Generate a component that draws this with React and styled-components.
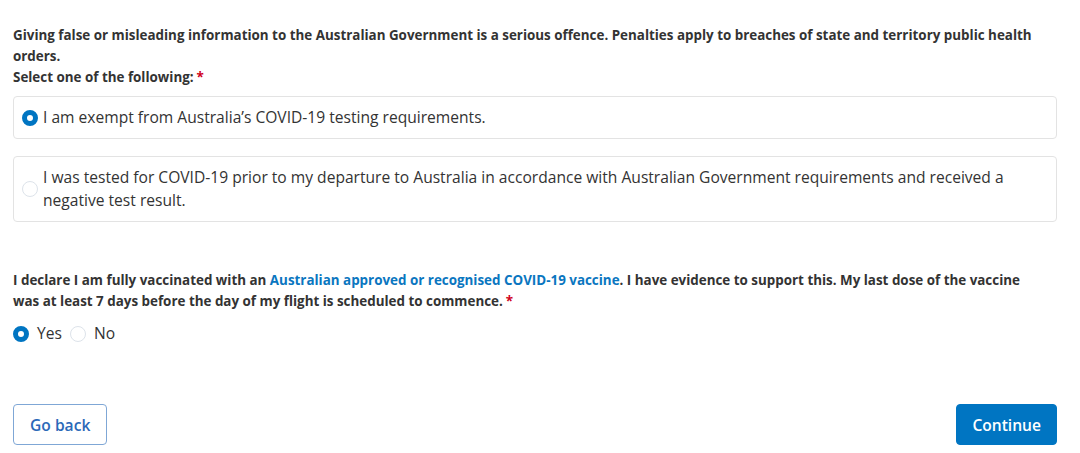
import React from 'react';
import styled, { createGlobalStyle } from 'styled-components';

const GlobalStyle = createGlobalStyle`
  html, body {
    margin: 0;
    padding: 0;
    background: #fff;
  }
  body {
    font-family: "Open Sans", "Noto Sans", Arial, sans-serif;
    color: #212529;
  }
`

const Page = styled.div`
  width: 1080px;
  height: 453px;
  box-sizing: border-box;
  padding: 25px 23px 0 13px;
  display: flex;
  flex-direction: column;
`

const Notice = styled.p`
  margin: 0;
  font-size: 13.4px;
  font-weight: 700;
  line-height: 21px;
  color: #333;
`

const Label = styled.p`
  margin: 0 0 8px;
  font-size: 13.4px;
  font-weight: 700;
  line-height: 21px;
  color: #333;
`

const Required = styled.span`
  color: #d0021b;
  margin-left: 3px;
`

const Options = styled.div`
  display: flex;
  flex-direction: column;
  gap: 17px;
`

const OptionCard = styled.label`
  display: flex;
  align-items: center;
  gap: 5px;
  border: 1px solid #e3e3e3;
  border-radius: 4px;
  padding: 9px 10px 9px 8px;
  font-size: 15.6px;
  line-height: 23px;
  color: #333;
`

const Radio = styled.span`
  flex: none;
  width: 16px;
  height: 16px;
  box-sizing: border-box;
  border-radius: 50%;
  border: ${p => (p.$checked ? '5px solid #0075c2' : '1px solid #dde3ea')};
  background: #fff;
`

const Declaration = styled.p`
  max-width: 1022px;
  margin: 48px 0 10px;
  font-size: 13.4px;
  font-weight: 700;
  line-height: 21px;
  color: #333;
`

const Link = styled.a`
  color: #0a76c0;
  text-decoration: none;
`

const Inline = styled.div`
  display: flex;
  align-items: center;
  gap: 8px;
  font-size: 15.6px;
  line-height: 23px;
  color: #333;
`

const InlineOption = styled.label`
  display: flex;
  align-items: center;
  gap: 8px;
`

const Actions = styled.div`
  margin-top: auto;
  margin-bottom: 8px;
  display: flex;
  justify-content: space-between;
`

const Button = styled.button`
  font-family: inherit;
  font-size: 15.6px;
  font-weight: 600;
  height: 41px;
  border-radius: 4px;
  padding: 0 ${p => (p.$primary ? '15px' : '16px')};
  cursor: pointer;
  border: 1px solid ${p => (p.$primary ? '#0075c2' : '#7fa7d6')};
  background: ${p => (p.$primary ? '#0075c2' : '#fff')};
  color: ${p => (p.$primary ? '#fff' : '#2b69b8')};
`

export default function App() {
  return (
    <>
      <GlobalStyle />
      <Page>
        <Notice>
          Giving false or misleading information to the Australian Government is a serious offence. Penalties apply to breaches of state and territory public health orders.
        </Notice>
        <Label>Select one of the following:<Required>*</Required></Label>
        <Options>
          <OptionCard>
            <Radio $checked />
            I am exempt from Australia’s COVID-19 testing requirements.
          </OptionCard>
          <OptionCard>
            <Radio />
            <span>
              I was tested for COVID-19 prior to my departure to Australia in accordance with Australian Government requirements and received a negative test result.
            </span>
          </OptionCard>
        </Options>
        <Declaration>
          I declare I am fully vaccinated with an <Link href="#">Australian approved or recognised COVID-19 vaccine</Link>. I have evidence to support this. My last dose of the vaccine was at least 7 days before the day of my flight is scheduled to commence.<Required>*</Required>
        </Declaration>
        <Inline>
          <InlineOption><Radio $checked />Yes</InlineOption>
          <InlineOption><Radio />No</InlineOption>
        </Inline>
        <Actions>
          <Button>Go back</Button>
          <Button $primary>Continue</Button>
        </Actions>
      </Page>
    </>
  );
}
